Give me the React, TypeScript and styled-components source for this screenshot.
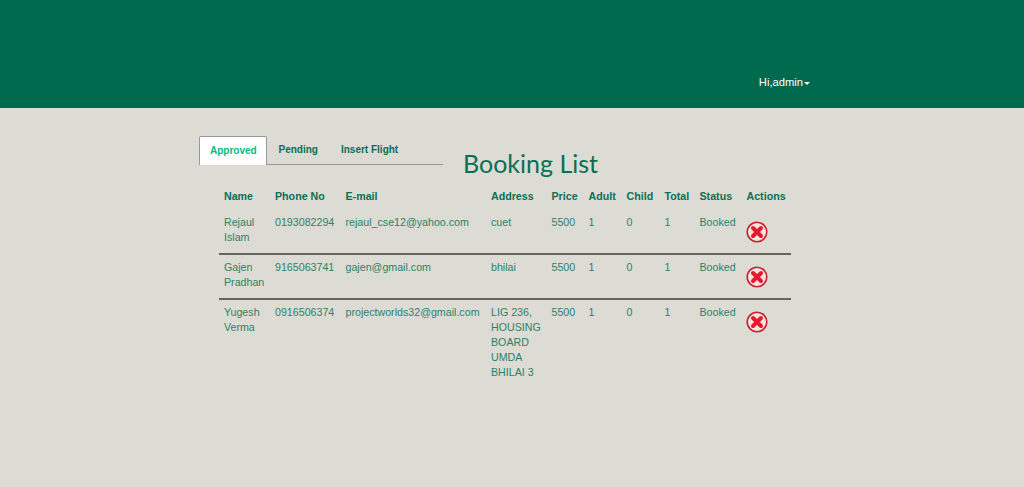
import React from 'react';
import styled, { createGlobalStyle } from 'styled-components';

const GlobalStyle = createGlobalStyle`
  html, body {
    margin: 0;
    padding: 0;
    background: #dcdcd4;
  }
  * {
    box-sizing: border-box;
  }
`;

const Page = styled.div`
  width: 1024px;
  height: 487px;
  overflow: hidden;
  background: #dcdcd4;
  font-family: 'Liberation Sans', Arial, sans-serif;
  font-size: 10.67px;
  color: #0b6e54;
`;

const Header = styled.header`
  height: 108px;
  background: #006a4e;
  display: flex;
  justify-content: flex-end;
  align-items: flex-start;
  padding: 75px 214px 0 0;
`;

const UserMenu = styled.a`
  display: flex;
  align-items: center;
  gap: 1px;
  color: #ffffff;
  font-size: 11.2px;
  line-height: 15px;
`;

const Caret = styled.span`
  width: 0;
  height: 0;
  margin-top: 1px;
  border-top: 3px solid #ffffff;
  border-left: 3px solid transparent;
  border-right: 3px solid transparent;
`;

const Content = styled.main`
  padding: 28px 0 0 199px;
`;

const TopRow = styled.div`
  display: flex;
  align-items: flex-start;
`;

const TabList = styled.ul`
  list-style: none;
  margin: 0;
  padding: 0;
  width: 244px;
  height: 29px;
  display: flex;
  border-bottom: 1px solid #999999;
`;

const Tab = styled.li<{ $active?: boolean }>`
  height: ${p => (p.$active ? '29px' : '28px')};
  width: ${p => (p.$active ? '68px' : 'auto')};
  padding: ${p => (p.$active ? '0 0 0 10px' : '0 11.5px')};
  line-height: 27px;
  font-size: 10px;
  font-weight: bold;
  white-space: nowrap;
  color: ${p => (p.$active ? '#00bd85' : '#0b6e54')};
  background: ${p => (p.$active ? '#ffffff' : 'transparent')};
  border: ${p => (p.$active ? '1px solid #999999' : 'none')};
  border-bottom: none;
  border-radius: 2px 2px 0 0;
`;

const Title = styled.h1`
  margin: 12px 0 0 20px;
  font-family: Lato, sans-serif;
  font-size: 25px;
  line-height: 30px;
  font-weight: 400;
  color: #0b6e54;
  white-space: nowrap;
`;

const BookingTable = styled.table`
  width: 572px;
  margin: 6px 0 0 20px;
  border-collapse: collapse;
  table-layout: fixed;
`;

const Column = styled.col<{ $width: number }>`
  width: ${p => p.$width}px;
`;

const HeadCell = styled.th`
  padding: 5px 5px 6px;
  line-height: 15px;
  text-align: left;
  font-weight: bold;
  white-space: nowrap;
`;

const Row = styled.tr`
  & + & td {
    border-top: 2px solid #666660;
  }
`;

const Cell = styled.td`
  padding: 5px;
  line-height: 15px;
  vertical-align: top;
  color: #2f8069;
`;

const DeleteLink = styled.a`
  display: flex;
  align-items: center;
  height: 33px;
  width: 24px;
  margin-left: -1px;
`;

const DeleteIcon = () => (
  <svg width="22" height="22" viewBox="0 0 22 22">
    <circle cx="11" cy="11" r="9.8" fill="#f3e4e0" stroke="#c8202c" strokeWidth="1.6" />
    <path d="M7 7l8 8M15 7l-8 8" stroke="#e8182c" strokeWidth="4" strokeLinecap="round" />
  </svg>
);

type Booking = { name: string; phone: string; email: string; address: string };

const bookings: Booking[] = [
  { name: 'Rejaul Islam', phone: '0193082294', email: 'rejaul_cse12@yahoo.com', address: 'cuet' },
  { name: 'Gajen Pradhan', phone: '9165063741', email: 'gajen@gmail.com', address: 'bhilai' },
  { name: 'Yugesh Verma', phone: '0916506374', email: 'projectworlds32@gmail.com', address: 'LIG 236, HOUSING BOARD UMDA BHILAI 3' }
];

const columns = [
  { title: 'Name', width: 51 },
  { title: 'Phone No', width: 70.5 },
  { title: 'E-mail', width: 145.5 },
  { title: 'Address', width: 60.5 },
  { title: 'Price', width: 37 },
  { title: 'Adult', width: 38 },
  { title: 'Child', width: 38 },
  { title: 'Total', width: 35 },
  { title: 'Status', width: 47 },
  { title: 'Actions', width: 49.5 }
];

export default function App() {
  return (
    <Page>
      <GlobalStyle />
      <Header>
        <UserMenu>
          Hi,admin
          <Caret />
        </UserMenu>
      </Header>
      <Content>
        <TopRow>
          <TabList>
            <Tab $active>Approved</Tab>
            <Tab>Pending</Tab>
            <Tab>Insert Flight</Tab>
          </TabList>
          <Title>Booking List</Title>
        </TopRow>
        <BookingTable>
          <colgroup>
            {columns.map(column => (
              <Column key={column.title} $width={column.width} />
            ))}
          </colgroup>
          <thead>
            <tr>
              {columns.map(column => (
                <HeadCell key={column.title}>{column.title}</HeadCell>
              ))}
            </tr>
          </thead>
          <tbody>
            {bookings.map(booking => (
              <Row key={booking.phone}>
                <Cell>{booking.name}</Cell>
                <Cell>{booking.phone}</Cell>
                <Cell>{booking.email}</Cell>
                <Cell>{booking.address}</Cell>
                <Cell>5500</Cell>
                <Cell>1</Cell>
                <Cell>0</Cell>
                <Cell>1</Cell>
                <Cell>Booked</Cell>
                <Cell>
                  <DeleteLink>
                    <DeleteIcon />
                  </DeleteLink>
                </Cell>
              </Row>
            ))}
          </tbody>
        </BookingTable>
      </Content>
    </Page>
  );
}
